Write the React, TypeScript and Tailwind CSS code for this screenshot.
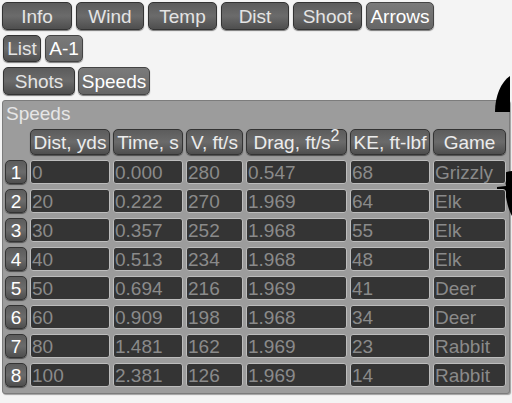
import React from "react";

const rows = [
  ["0", "0.000", "280", "0.547", "68", "Grizzly"],
  ["20", "0.222", "270", "1.969", "64", "Elk"],
  ["30", "0.357", "252", "1.968", "55", "Elk"],
  ["40", "0.513", "234", "1.968", "48", "Elk"],
  ["50", "0.694", "216", "1.969", "41", "Deer"],
  ["60", "0.909", "198", "1.968", "34", "Deer"],
  ["80", "1.481", "162", "1.969", "23", "Rabbit"],
  ["100", "2.381", "126", "1.969", "14", "Rabbit"],
];

const btn =
  "flex items-center justify-center rounded-[5px] border border-[#333] bg-gradient-to-b from-[#5c5c5c] via-[#6b6b6b] to-[#4e4e4e] text-[#e4e4e4] shadow-[0_1px_1px_rgba(0,0,0,0.5)] leading-none";

function Btn({ label, w, h, active }: { label: string; w: string; h: string; active?: boolean }) {
  return (
    <div
      className={`${btn} ${w} ${h} text-[19px] ${
        active ? "from-[#7a7a7a] via-[#727272] to-[#666] text-white border-[#444]" : ""
      }`}
    >
      {label}
    </div>
  );
}

export default function App() {
  return (
    <div className="relative w-[512px] h-[403px] overflow-hidden bg-[#f4f4f4] font-['Liberation_Sans',Arial,sans-serif]">
      <div className="flex flex-col gap-[5px] pl-[2px] pt-[2px]">
        <div className="flex gap-[4px]">
          <Btn label="Info" w="w-[70px]" h="h-[28px]" />
          <Btn label="Wind" w="w-[68px]" h="h-[28px]" />
          <Btn label="Temp" w="w-[69px]" h="h-[28px]" />
          <Btn label="Dist" w="w-[68px]" h="h-[28px]" />
          <Btn label="Shoot" w="w-[69px]" h="h-[28px]" />
          <Btn label="Arrows" w="w-[68px]" h="h-[28px]" active />
        </div>
        <div className="flex gap-[4px] pl-[1px]">
          <Btn label="List" w="w-[38px]" h="h-[27px]" />
          <Btn label="A-1" w="w-[38px]" h="h-[27px]" active />
        </div>
        <div className="flex gap-[3px] pl-[1px]">
          <Btn label="Shots" w="w-[72px]" h="h-[28px]" />
          <Btn label="Speeds" w="w-[72px]" h="h-[28px]" active />
        </div>

        <div className="relative w-[508px] h-[294px] rounded-[3px] border border-[#7c7c7c] bg-[#9c9c9c] pl-[2px] pt-[2px] shadow-[1px_1px_1px_rgba(0,0,0,0.35)]">
          {/* lower part of the black glyph, behind the cells */}
          <svg className="absolute right-[-3px] top-[70px]" width="16" height="45" viewBox="0 0 16 45">
            <path d="M8 2 C10 1 13 0 16 0 L16 45 C13 40 11 32 10 26 L1 22 L1 16 L10 15 Z" fill="#000" />
          </svg>
          <div className="relative pl-[1px] text-[19px] leading-[22px] text-[#e6e6e6]">Speeds</div>
          <div className="relative mt-[4px] grid grid-cols-[22px_80px_70px_57px_101px_80px_73px] gap-x-[3px] gap-y-[5px]">
            <div />
            {["Dist, yds", "Time, s", "V, ft/s", "Drag, ft/s", "KE, ft-lbf", "Game"].map((t) => (
              <div key={t} className={`${btn} h-[26px] text-[19px] text-[#ececec]`}>
                {t}
                {t === "Drag, ft/s" && <sup className="text-[16px] -top-[6px]">2</sup>}
              </div>
            ))}
            {rows.map((r, i) => (
              <React.Fragment key={i}>
                <div className={`${btn} h-[24px] text-[19px] text-white`}>{i + 1}</div>
                {r.map((c, j) => (
                  <div
                    key={j}
                    className="flex h-[24px] items-center overflow-hidden rounded-[3px] border border-[#bdbdbd] bg-[#343434] pl-[1px] text-[19px] leading-none text-[#8a8a8a]"
                  >
                    {c}
                  </div>
                ))}
              </React.Fragment>
            ))}
          </div>
        </div>
      </div>

      {/* upper part of the black glyph, over the panel corner */}
      <svg className="absolute left-[494px] top-[74px]" width="18" height="39" viewBox="0 0 18 39">
        <path d="M1 38 C1 22 7 8 16 2 L16 38 Z" fill="#000" />
      </svg>
    </div>
  );
}
